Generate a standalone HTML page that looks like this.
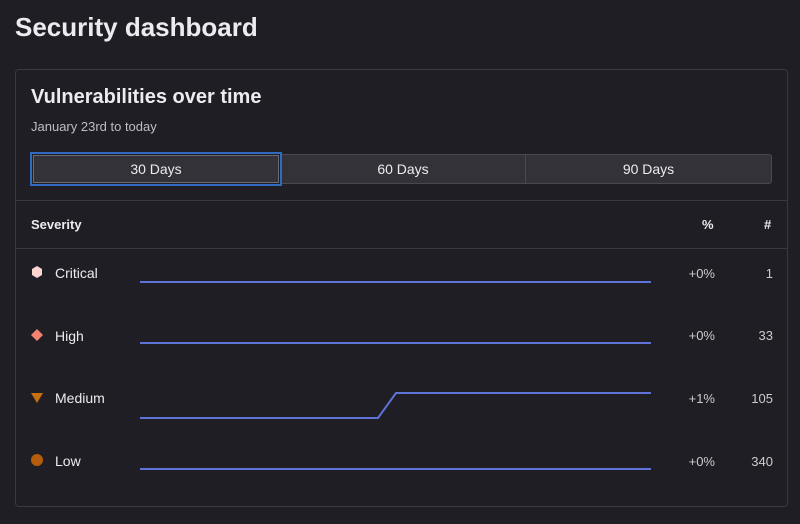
<!DOCTYPE html>
<html><head><style>
body{margin:0;width:800px;height:524px;background:#1f1e24;font-family:"Liberation Sans",sans-serif;color:#ececef;position:relative;overflow:hidden}
.a{position:absolute;white-space:nowrap}
.card{position:absolute;left:15px;top:69px;width:773px;height:438px;border:1px solid #3a393f;border-radius:4px;box-sizing:border-box}
.hr{position:absolute;left:16px;width:772px;height:1px;background:#3a393f}
.seg{position:absolute;top:154px;height:30px;background:#333238;border:1px solid #4a4950;box-sizing:border-box;font-size:14px;text-align:center;line-height:28px}
.lbl{font-size:14px}
.num{font-size:13px;color:#ccc;text-align:right}
</style></head><body>
<div class="a" style="left:15px;top:12px;font-size:26px;font-weight:bold">Security dashboard</div>
<div class="card"></div>
<div class="a" style="left:31px;top:86px;font-size:20px;font-weight:bold">Vulnerabilities over time</div>
<div class="a" style="left:31px;top:119px;font-size:13px;color:#bdbdc2">January 23rd to today</div>
<div class="seg" style="left:279px;width:247px;border-right:none">60 Days</div>
<div class="seg" style="left:525px;width:247px;border-radius:0 3px 3px 0">90 Days</div>
<div class="seg" style="left:30px;top:152px;width:252px;height:34px;border:2px solid #2f6bbf;background:#1f1e24;padding:1px;line-height:26px"><div style="border:1px solid #6a6a70;background:#333238;height:28px;box-sizing:border-box">30 Days</div></div>
<div class="hr" style="top:200px"></div>
<div class="a" style="left:31px;top:217px;font-size:13px;font-weight:bold">Severity</div>
<div class="a" style="left:702px;top:217px;font-size:13px;font-weight:bold">%</div>
<div class="a" style="left:764px;top:217px;font-size:13px;font-weight:bold">#</div>
<div class="hr" style="top:248px"></div>
<svg class="a" style="left:0;top:0" width="800" height="524">
<polygon points="37,266 42,269 42,275 37,278 32,275 32,269" fill="#fcd6cf"/>
<polygon points="37,329 43,335 37,341 31,335" fill="#f5826e"/>
<polygon points="31,393 43,393 37,403" fill="#c76f11"/>
<circle cx="37" cy="460" r="6" fill="#b35d0c"/>
<g stroke="#5f72d9" stroke-width="2" fill="none">
<line x1="140" y1="282" x2="651" y2="282"/>
<line x1="140" y1="343" x2="651" y2="343"/>
<polyline points="140,418 378,418 396,393 651,393"/>
<line x1="140" y1="469" x2="651" y2="469"/>
</g></svg>
<div class="a lbl" style="left:55px;top:265px">Critical</div>
<div class="a lbl" style="left:55px;top:328px">High</div>
<div class="a lbl" style="left:55px;top:390px">Medium</div>
<div class="a lbl" style="left:55px;top:453px">Low</div>
<div class="a num" style="left:670px;width:45px;top:266px">+0%</div>
<div class="a num" style="left:730px;width:43px;top:266px">1</div>
<div class="a num" style="left:670px;width:45px;top:328px">+0%</div>
<div class="a num" style="left:730px;width:43px;top:328px">33</div>
<div class="a num" style="left:670px;width:45px;top:391px">+1%</div>
<div class="a num" style="left:730px;width:43px;top:391px">105</div>
<div class="a num" style="left:670px;width:45px;top:454px">+0%</div>
<div class="a num" style="left:730px;width:43px;top:454px">340</div>
</body></html>
